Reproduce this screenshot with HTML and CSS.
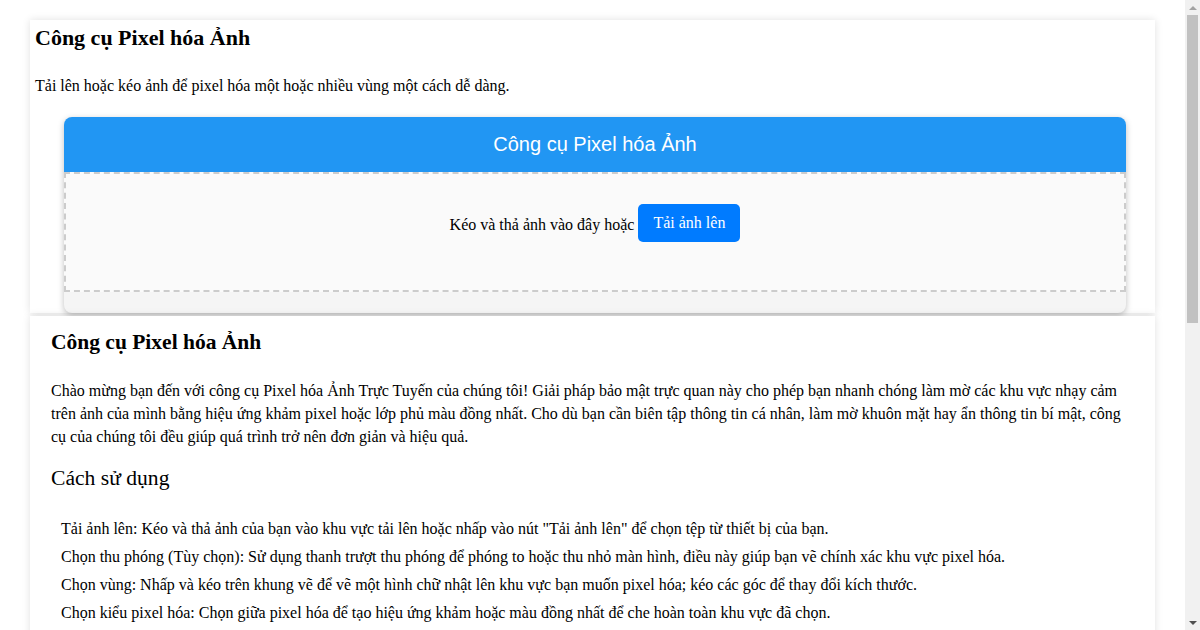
FILE: index.html
```html
<!DOCTYPE html>
<html lang="vi">
<head>
<meta charset="utf-8">
<title>Công cụ Pixel hóa Ảnh</title>
<link rel="stylesheet" href="styles.css">
</head>
<body>
<div class="page">
  <div class="viewport">
    <div class="container tool">
      <h1 class="title">Công cụ Pixel hóa Ảnh</h1>
      <p class="lead">Tải lên hoặc kéo ảnh để pixel hóa một hoặc nhiều vùng một cách dễ dàng.</p>
      <div class="card">
        <div class="card-header">Công cụ Pixel hóa Ảnh</div>
        <div class="dropzone">
          <span class="drop-text">Kéo và thả ảnh vào đây hoặc</span><button class="upload-btn" type="button">Tải ảnh lên</button>
        </div>
      </div>
    </div>
    <div class="container article">
      <h2 class="article-title">Công cụ Pixel hóa Ảnh</h2>
      <p class="intro">Chào mừng bạn đến với công cụ Pixel hóa Ảnh Trực Tuyến của chúng tôi! Giải pháp bảo mật trực quan này cho phép bạn nhanh chóng làm mờ các khu vực nhạy cảm trên ảnh của mình bằng hiệu ứng khảm pixel hoặc lớp phủ màu đồng nhất. Cho dù bạn cần biên tập thông tin cá nhân, làm mờ khuôn mặt hay ẩn thông tin bí mật, công cụ của chúng tôi đều giúp quá trình trở nên đơn giản và hiệu quả.</p>
      <h3 class="section-title">Cách sử dụng</h3>
      <ul class="steps">
        <li>Tải ảnh lên: Kéo và thả ảnh của bạn vào khu vực tải lên hoặc nhấp vào nút "Tải ảnh lên" để chọn tệp từ thiết bị của bạn.</li>
        <li>Chọn thu phóng (Tùy chọn): Sử dụng thanh trượt thu phóng để phóng to hoặc thu nhỏ màn hình, điều này giúp bạn vẽ chính xác khu vực pixel hóa.</li>
        <li>Chọn vùng: Nhấp và kéo trên khung vẽ để vẽ một hình chữ nhật lên khu vực bạn muốn pixel hóa; kéo các góc để thay đổi kích thước.</li>
        <li>Chọn kiểu pixel hóa: Chọn giữa pixel hóa để tạo hiệu ứng khảm hoặc màu đồng nhất để che hoàn toàn khu vực đã chọn.</li>
      </ul>
    </div>
  </div>
  <div class="scrollbar">
    <div class="sb-arrow sb-up"></div>
    <div class="sb-track"><div class="sb-thumb"></div></div>
    <div class="sb-arrow sb-down"></div>
  </div>
</div>
</body>
</html>
```

FILE: styles.css
```css
html, body {
  margin: 0;
  padding: 0;
  height: 630px;
  overflow: hidden;
  background: #fff;
}

body {
  font-family: "Liberation Serif", "Times New Roman", serif;
  font-size: 16px;
  color: #000;
}

.page {
  display: flex;
  height: 630px;
  width: 1200px;
}

.viewport {
  flex: 1;
  overflow: hidden;
  padding-top: 20px;
}

.container {
  width: 1125px;
  margin: 0 auto;
  background: #fff;
  box-shadow: 0 0 8px rgba(0, 0, 0, 0.12);
  box-sizing: border-box;
}

.tool {
  padding: 4px 5px 0;
  display: flow-root;
}

.title {
  margin: 0;
  font-size: 22px;
  font-weight: bold;
  line-height: 27px;
}

.lead {
  margin: 26px 0 22px;
  line-height: 18px;
}

.card {
  margin-left: 29px;
  width: 1062px;
  background: #f5f5f5;
  border-radius: 8px;
  box-shadow: 0 2px 6px rgba(0, 0, 0, 0.25);
  padding-bottom: 21px;
  overflow: hidden;
}

.card-header {
  background: #2196f3;
  color: #fff;
  font-family: "Liberation Sans", Arial, sans-serif;
  font-size: 20px;
  height: 55px;
  display: flex;
  align-items: center;
  justify-content: center;
}

.dropzone {
  border: 2px dashed #ccc;
  background: #fafafa;
  height: 116px;
  box-sizing: content-box;
  display: flex;
  justify-content: center;
  align-items: flex-start;
}

.drop-text {
  margin-top: 42px;
  line-height: 18px;
}

.upload-btn {
  margin-top: 30px;
  margin-left: 4px;
  height: 38px;
  padding: 0 15px;
  border: none;
  border-radius: 5px;
  background: #007bff;
  color: #fff;
  font-family: "Liberation Serif", "Times New Roman", serif;
  font-size: 16px;
}

.article {
  margin-top: 3px;
  padding: 13px 21px 20px;
  height: 400px;
}

.article-title {
  margin: 0;
  font-size: 21.5px;
  font-weight: bold;
  line-height: 27px;
}

.intro {
  margin: 23px 0 0;
  line-height: 23px;
}

.section-title {
  margin: 17px 0 0;
  font-size: 21.6px;
  font-weight: normal;
  line-height: 26px;
}

.steps {
  list-style: none;
  margin: 24px 0 0;
  padding-left: 10px;
}

.steps li {
  line-height: 28px;
}

.scrollbar {
  width: 15px;
  background: #f1f1f1;
  display: flex;
  flex-direction: column;
}

.sb-arrow {
  height: 15px;
  display: flex;
  align-items: center;
  justify-content: center;
}

.sb-up::before {
  content: "";
  border-left: 4px solid transparent;
  border-right: 4px solid transparent;
  border-bottom: 4px solid #a3a3a3;
}

.sb-down::before {
  content: "";
  border-left: 4px solid transparent;
  border-right: 4px solid transparent;
  border-top: 4px solid #505050;
}

.sb-track {
  flex: 1;
  padding: 0 2px;
}

.sb-thumb {
  height: 308px;
  background: #c1c1c1;
}
```
